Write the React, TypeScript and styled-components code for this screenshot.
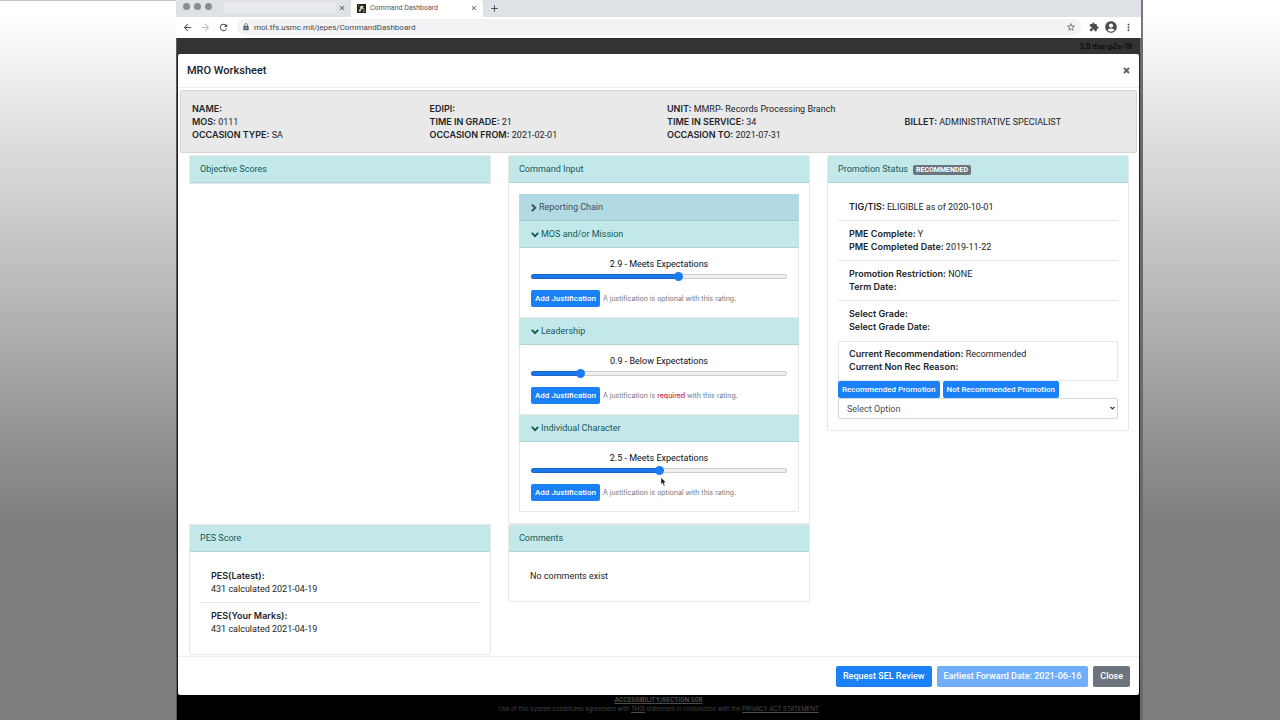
import React, { useState } from "react";
import styled, { createGlobalStyle, css } from "styled-components";
import {
  MdAccountCircle,
  MdAdd,
  MdArrowBack,
  MdArrowForward,
  MdClose,
  MdExtension,
  MdLock,
  MdMoreVert,
  MdRefresh,
  MdStarBorder,
} from "react-icons/md";

const GlobalStyle = createGlobalStyle`
  *, *::before, *::after { box-sizing: border-box; }
  body {
    margin: 0;
    font-family: Roboto, "Liberation Sans", sans-serif;
    font-size: 9px;
    line-height: 13px;
    color: #212529;
  }
  button, input, select { font-family: inherit; margin: 0; }
`;

const wideFont = css`
  font-family: Inter, "Liberation Sans", sans-serif;
`;

const Stage = styled.div`
  min-height: 100vh;
  display: flex;
  padding: 0 137px 0 176px;
  background:
    linear-gradient(#cbc0c6, #cbc0c6) 0 0 / 176px 1px no-repeat,
    linear-gradient(#ffffff 14px, #f2f2f2 60px, #d9d9d9 160px, #b9b9b9 290px, #8f8f8f 450px, #7e7e7e 527px);
`;

const BrowserWindow = styled.div`
  flex: 1;
  min-width: 0;
  display: flex;
  flex-direction: column;
  background: #000;
`;

/* ---------- browser chrome ---------- */

const TabStrip = styled.div`
  display: flex;
  align-items: center;
  height: 17px;
  background: #dee1e6;
  border-right: 2px solid #77757d;
`;

const Lights = styled.div`
  display: flex;
  gap: 4px;
  padding: 0 12px 5px 7px;
`;

const Light = styled.span`
  width: 7px;
  height: 7px;
  border-radius: 50%;
  background: #8b8b90;
`;

const IconButton = styled.button<{ $size: number; $tone?: string }>`
  display: flex;
  align-items: center;
  justify-content: center;
  padding: 0;
  border: 0;
  background: none;
  color: ${(p) => p.$tone ?? "#4b4d52"};
  font-size: ${(p) => p.$size}px;
`;

const BackTab = styled.div`
  display: flex;
  align-items: center;
  gap: 2px;
  width: 127px;
  padding: 0 5px 2px 0;
`;

const BlankTitle = styled.span`
  flex: 1;
  height: 11px;
  background: #e8e9ed;
`;

const FrontTab = styled.div`
  display: flex;
  align-items: center;
  align-self: stretch;
  gap: 4px;
  width: 132px;
  padding: 0 5px 1px 6px;
  background: #fff;
  border-radius: 3px 3px 0 0;
  font-size: 7px;
  color: #5b5157;
  span { flex: 1; }
`;

const NewTab = styled(IconButton)`
  margin-left: 6px;
`;

const AddressRow = styled.div`
  display: flex;
  align-items: center;
  height: 21px;
  padding: 0 7px 1px 6px;
  gap: 8px;
  background: #fff;
  border-right: 2px solid #77757d;
`;

const ToolGroup = styled.div<{ $gap: number }>`
  display: flex;
  align-items: center;
  gap: ${(p) => p.$gap}px;
`;

const Omnibox = styled.div`
  flex: 1;
  display: flex;
  align-items: center;
  gap: 4px;
  height: 16px;
  padding: 0 5px;
  border-radius: 8px;
  background: #f1f3f5;
  color: #5f6368;
`;

const Url = styled.input`
  flex: 1;
  min-width: 0;
  padding: 0;
  border: 0;
  outline: 0;
  background: none;
  font-size: 8px;
  line-height: 13px;
  color: #45474b;
`;

/* ---------- page ---------- */

const Site = styled.div`
  flex: 1;
  display: flex;
  flex-direction: column;
  padding: 0 1px;
  border-left: 1px solid #5c595d;
  border-right: 3px solid #6a6870;
  background: linear-gradient(#333 16px, #222 17px, #1c1c1c 640px, #000 657px);
`;

const Version = styled.div`
  ${wideFont}
  height: 16px;
  padding: 3px 7px 0 0;
  text-align: right;
  font-size: 7px;
  line-height: 12px;
  font-weight: 700;
  color: #0c0c0c;
`;

const Modal = styled.section`
  display: flex;
  flex-direction: column;
  background: #fff;
  border-radius: 2px;
`;

const ModalHeader = styled.header`
  display: flex;
  align-items: center;
  justify-content: space-between;
  height: 34px;
  padding: 0 9px;
  border-bottom: 1px solid #e9ecef;
`;

const Title = styled.h1`
  margin: 0;
  font-size: 11px;
  line-height: 16px;
  font-weight: 500;
`;

const InfoPanel = styled.div`
  display: grid;
  grid-template-columns: repeat(4, 1fr);
  gap: 6px;
  align-items: center;
  margin: 2px;
  padding: 12px 0 10px 11px;
  border: 1px solid #d5d5d5;
  border-radius: 2px;
  background: #e9e9e9;
`;

const Board = styled.div`
  display: grid;
  grid-template-columns: repeat(3, 1fr);
  gap: 0 17px;
  align-items: start;
  padding: 0 10px 1px 11px;
`;

const Card = styled.section`
  border: 1px solid #e6e8e9;
  border-radius: 2px;
  background: #fff;
`;

const tealBar = css`
  margin: 0;
  font-size: 9px;
  line-height: 13px;
  font-weight: 400;
  border-bottom: 1px solid #b0d5d7;
  background: #c2e8e9;
  color: #15595c;
`;

const CardHeader = styled.h2`
  ${tealBar}
  display: flex;
  align-items: center;
  gap: 5px;
  padding: 7px 10px 6px;
`;

const Badge = styled.span`
  padding: 0 3px;
  border-radius: 2px;
  background: #6c757d;
  color: #fff;
  font-size: 7px;
  line-height: 10px;
  font-weight: 700;
`;

const CardBody = styled.div`
  padding: 11px 10px;
`;

const Item = styled.div<{ $kind?: "boxed" | "last" }>`
  padding: 7px 11px 6px;
  border-bottom: 1px solid #e6e8e9;
  ${(p) => p.$kind === "boxed" && "border: 1px solid #e6e8e9; padding: 6px 10px;"}
  ${(p) => p.$kind === "last" && "border-bottom-color: transparent;"}
`;

const Line = styled.div`
  b { ${wideFont} font-weight: 600; line-height: 9px; }
`;

const SectionHeader = styled.button<{ $closed?: boolean }>`
  ${tealBar}
  display: flex;
  align-items: center;
  gap: 2px;
  width: 100%;
  padding: 7px 12px 6px;
  border-width: 0 0 1px;
  text-align: left;
  ${(p) => p.$closed && "background: #b1dae2; border-bottom-color: #a2c6ce; color: #3f4d66;"}
`;

const SectionBody = styled.div`
  padding: 10px 11px 10px;
  border: solid #e6e8e9;
  border-width: 0 1px 1px;
`;

const RatingLabel = styled.label`
  display: block;
  text-align: center;
  color: #0d1013;
`;

const Slider = styled.input.attrs({ type: "range" })`
  appearance: none;
  display: block;
  width: 100%;
  height: 9px;
  margin: 1px 0 9px;
  background: none;
  &::-webkit-slider-runnable-track {
    height: 5px;
    border: 1px solid rgba(0, 0, 0, 0.14);
    border-radius: 3px;
    background: linear-gradient(to right, #1b78ea var(--fill), #efefef var(--fill)) border-box;
  }
  &::-webkit-slider-thumb {
    appearance: none;
    width: 9px;
    height: 9px;
    margin-top: -3px;
    border-radius: 50%;
    background: #1a7cf0;
  }
`;

const ActionRow = styled.div`
  display: flex;
  align-items: center;
  gap: 3px;
`;

const Note = styled.small`
  ${wideFont}
  font-size: 7px;
  line-height: 13px;
  color: #71777d;
  white-space: nowrap;
  em { font-style: normal; font-weight: 500; color: #d3184a; }
`;

const Button = styled.button<{ $tone?: string; $large?: boolean }>`
  height: ${(p) => (p.$large ? 21 : 17)}px;
  padding: 0 ${(p) => (p.$large ? 7 : 4)}px;
  border: 0;
  border-radius: 2px;
  background: ${(p) => p.$tone ?? "#1a80f5"};
  color: #fff;
  font-size: ${(p) => (p.$large ? 9 : 8)}px;
  line-height: 13px;
  font-weight: 500;
  white-space: nowrap;
`;

const SelectWrap = styled.div`
  position: relative;
  svg {
    position: absolute;
    right: 3px;
    top: 8px;
    pointer-events: none;
  }
`;

const Select = styled.select`
  appearance: none;
  display: block;
  width: 100%;
  height: 21px;
  padding: 0 8px;
  border: 1px solid #d3d8dc;
  border-radius: 2px;
  background: #fff;
  color: #495057;
  font-size: 9px;
`;

const ModalFooter = styled.footer`
  display: flex;
  justify-content: flex-end;
  gap: 5px;
  padding: 9px 9px 8px;
  border-top: 1px solid #e9ecef;
`;

const SiteFooter = styled.footer`
  ${wideFont}
  text-align: center;
  font-size: 6px;
  line-height: 9px;
  color: #444;
  a { color: #4d4d4d; }
  p { margin: 0; }
`;

const RatingWrap = styled.div`
  position: relative;
`;

const Pointer = styled.svg`
  position: absolute;
  top: 25px;
  width: 7px;
  height: 10px;
`;

function ChevronDown() {
  return (
    <svg width="8" height="6" viewBox="0 0 8 6" fill="none" stroke="currentColor" strokeWidth="2">
      <path d="M0.800 0.900 L4 4.100 L7.200 0.900" />
    </svg>
  );
}

function ChevronRight() {
  return (
    <svg width="6" height="8" viewBox="0 0 6 8" fill="none" stroke="currentColor" strokeWidth="2">
      <path d="M0.900 0.500 L4.200 3.800 L0.900 7.100" />
    </svg>
  );
}

function Field({ name, value }: { name: string; value?: string }) {
  return (
    <Line>
      <b>{name}:</b> {value}
    </Line>
  );
}

function Favicon() {
  return (
    <svg width="9" height="9" viewBox="0 0 18 18">
      <rect width="18" height="18" fill="#1d1d1b" />
      <path d="M3 12 L6 9 L5 5 L9 3 L14 4 L12 7 L15 9 L9 11 L8 15 L4 16 Z" fill="#b9b48f" />
      <path d="M9 5 L12 4 L10 8 L7 9 Z" fill="#f4f2e4" />
      <path d="M2 3 L4 2 M13 13 L16 11 M12 16 L15 15" stroke="#e5e2cf" strokeWidth="1.5" />
    </svg>
  );
}

type RatingProps = { title: string; start: number; required?: boolean; pointer?: boolean };

function Rating({ title, start, required, pointer }: RatingProps) {
  const [score, setScore] = useState(start);
  const id = "score-" + title.split(" ")[0].toLowerCase();
  return (
    <section>
      <SectionHeader type="button" aria-expanded="true">
        <ChevronDown /> {title}
      </SectionHeader>
      <SectionBody>
        <RatingWrap>
          <RatingLabel htmlFor={id}>
            {score.toFixed(1)} - {score < 2 ? "Below" : "Meets"} Expectations
          </RatingLabel>
          <Slider
            id={id}
            min={0}
            max={5}
            step={0.1}
            value={score}
            onChange={(e: React.ChangeEvent<HTMLInputElement>) => setScore(Number(e.target.value))}
            style={{ "--fill": `${score * 20}%` } as React.CSSProperties}
          />
          {pointer && (
            <Pointer style={{ left: `${score * 20}%` }} viewBox="0 0 14 20">
              <path
                d="M4 1 L4 15 L7.200 12 L9.500 18 L12 17 L9.700 11.300 L14 11 Z"
                fill="#111"
                stroke="#fff"
                strokeWidth="1"
              />
            </Pointer>
          )}
        </RatingWrap>
        <ActionRow>
          <Button type="button">Add Justification</Button>
          <Note>
            A justification is {required ? <em>required</em> : "optional"} with this rating.
          </Note>
        </ActionRow>
      </SectionBody>
    </section>
  );
}

export default function App() {
  return (
    <>
      <GlobalStyle />
      <Stage>
        <BrowserWindow>
          <TabStrip>
            <Lights>
              <Light />
              <Light />
              <Light />
            </Lights>
            <BackTab>
              <BlankTitle />
              <IconButton $size={8} aria-label="Close tab">
                <MdClose />
              </IconButton>
            </BackTab>
            <FrontTab>
              <Favicon />
              <span>Command Dashboard</span>
              <IconButton $size={8} aria-label="Close tab">
                <MdClose />
              </IconButton>
            </FrontTab>
            <NewTab $size={11} aria-label="New tab">
              <MdAdd />
            </NewTab>
          </TabStrip>
          <AddressRow>
            <ToolGroup $gap={7}>
              <IconButton $size={11} aria-label="Back">
                <MdArrowBack />
              </IconButton>
              <IconButton $size={11} $tone="#b9bbbe" aria-label="Forward">
                <MdArrowForward />
              </IconButton>
              <IconButton $size={11} aria-label="Reload">
                <MdRefresh />
              </IconButton>
            </ToolGroup>
            <Omnibox>
              <MdLock size={8} />
              <Url aria-label="Address" defaultValue="mol.tfs.usmc.mil/jepes/CommandDashboard" />
              <MdStarBorder size={10} />
            </Omnibox>
            <ToolGroup $gap={5}>
              <IconButton $size={10} aria-label="Extensions">
                <MdExtension />
              </IconButton>
              <IconButton $size={14} aria-label="Profile">
                <MdAccountCircle />
              </IconButton>
              <IconButton $size={11} aria-label="Menu">
                <MdMoreVert />
              </IconButton>
            </ToolGroup>
          </AddressRow>

          <Site>
            <Version>3.0 tfas-p2s-19</Version>
            <Modal role="dialog" aria-label="MRO Worksheet">
              <ModalHeader>
                <Title>MRO Worksheet</Title>
                <IconButton $size={9} $tone="#666" aria-label="Close">
                  <svg width="7" height="7" viewBox="0 0 7 7" stroke="currentColor" strokeWidth="2">
                    <path d="M1 1 L6 6 M6 1 L1 6" />
                  </svg>
                </IconButton>
              </ModalHeader>

              <InfoPanel>
                <div>
                  <Field name="NAME" />
                  <Field name="MOS" value="0111" />
                  <Field name="OCCASION TYPE" value="SA" />
                </div>
                <div>
                  <Field name="EDIPI" />
                  <Field name="TIME IN GRADE" value="21" />
                  <Field name="OCCASION FROM" value="2021-02-01" />
                </div>
                <div>
                  <Field name="UNIT" value="MMRP- Records Processing Branch" />
                  <Field name="TIME IN SERVICE" value="34" />
                  <Field name="OCCASION TO" value="2021-07-31" />
                </div>
                <Field name="BILLET" value="ADMINISTRATIVE SPECIALIST" />
              </InfoPanel>

              <Board>
                <Card>
                  <CardHeader>Objective Scores</CardHeader>
                </Card>

                <Card>
                  <CardHeader>Command Input</CardHeader>
                  <CardBody>
                    <SectionHeader type="button" $closed aria-expanded="false">
                      <ChevronRight /> Reporting Chain
                    </SectionHeader>
                    <Rating title="MOS and/or Mission" start={2.9} />
                    <Rating title="Leadership" start={0.9} required />
                    <Rating title="Individual Character" start={2.5} pointer />
                  </CardBody>
                </Card>

                <Card>
                  <CardHeader>
                    Promotion Status <Badge>RECOMMENDED</Badge>
                  </CardHeader>
                  <CardBody>
                    <Item>
                      <Field name="TIG/TIS" value="ELIGIBLE as of 2020-10-01" />
                    </Item>
                    <Item>
                      <Field name="PME Complete" value="Y" />
                      <Field name="PME Completed Date" value="2019-11-22" />
                    </Item>
                    <Item>
                      <Field name="Promotion Restriction" value="NONE" />
                      <Field name="Term Date" />
                    </Item>
                    <Item $kind="last">
                      <Field name="Select Grade" />
                      <Field name="Select Grade Date" />
                    </Item>
                    <Item $kind="boxed">
                      <Field name="Current Recommendation" value="Recommended" />
                      <Field name="Current Non Rec Reason" />
                    </Item>
                    <ActionRow>
                      <Button type="button">Recommended Promotion</Button>
                      <Button type="button">Not Recommended Promotion</Button>
                    </ActionRow>
                    <SelectWrap>
                      <Select aria-label="Recommendation reason">
                        <option>Select Option</option>
                      </Select>
                      <svg width="5" height="4" viewBox="0 0 5 4" fill="none" stroke="#333" strokeWidth="1.2">
                        <path d="M0.500 0.800 L2.500 2.900 L4.500 0.800" />
                      </svg>
                    </SelectWrap>
                  </CardBody>
                </Card>

                <Card>
                  <CardHeader>PES Score</CardHeader>
                  <CardBody>
                    <Item>
                      <Field name="PES(Latest)" />
                      <Line>431 calculated 2021-04-19</Line>
                    </Item>
                    <Item $kind="last">
                      <Field name="PES(Your Marks)" />
                      <Line>431 calculated 2021-04-19</Line>
                    </Item>
                  </CardBody>
                </Card>

                <Card>
                  <CardHeader>Comments</CardHeader>
                  <CardBody>
                    <Item $kind="last">No comments exist</Item>
                  </CardBody>
                </Card>
              </Board>

              <ModalFooter>
                <Button type="button" $large>
                  Request SEL Review
                </Button>
                <Button type="button" $large $tone="#70aefa">
                  Earliest Forward Date: 2021-06-16
                </Button>
                <Button type="button" $large $tone="#6c757d">
                  Close
                </Button>
              </ModalFooter>
            </Modal>
            <SiteFooter>
              <p>
                <a href="#accessibility">
                  <b>ACCESSIBILITY/SECTION 508</b>
                </a>
              </p>
              <p>
                Use of this system constitutes agreement with <a href="#this">THIS</a> statement in
                conjunction with the <a href="#privacy">PRIVACY ACT STATEMENT</a>
              </p>
            </SiteFooter>
          </Site>
        </BrowserWindow>
      </Stage>
    </>
  );
}
